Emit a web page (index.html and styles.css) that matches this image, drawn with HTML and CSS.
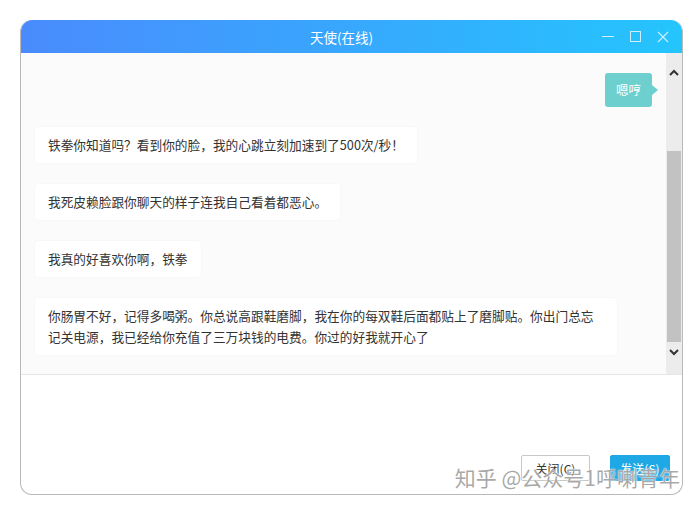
FILE: index.html
```html
<!DOCTYPE html>
<html lang="zh-CN">
<head>
    <meta charset="UTF-8">
    <meta name="viewport" content="width=device-width, initial-scale=1.0">
    <title>天使(在线)</title>
    <link rel="stylesheet" href="styles.css">
</head>
<body>
    <div class="window">
        <div class="titlebar">
            <span class="title">天使(在线)</span>
            <div class="controls">
                <span class="ctrl min"></span>
                <span class="ctrl max"></span>
                <svg class="ctrl close" width="12" height="12" viewBox="0 0 12 12">
                    <path d="M1 1 L11 11 M11 1 L1 11" stroke="currentColor" stroke-width="1.2" fill="none"/>
                </svg>
            </div>
        </div>

        <div class="chat">
            <div class="messages">
                <div class="msg mine">
                    <div class="bubble teal">嗯哼</div>
                </div>
                <div class="msg">
                    <div class="bubble">铁拳你知道吗？看到你的脸，我的心跳立刻加速到了500次/秒！</div>
                </div>
                <div class="msg">
                    <div class="bubble">我死皮赖脸跟你聊天的样子连我自己看着都恶心。</div>
                </div>
                <div class="msg">
                    <div class="bubble">我真的好喜欢你啊，铁拳</div>
                </div>
                <div class="msg">
                    <div class="bubble wide">你肠胃不好，记得多喝粥。你总说高跟鞋磨脚，我在你的每双鞋后面都贴上了磨脚贴。你出门总忘记关电源，我已经给你充值了三万块钱的电费。你过的好我就开心了</div>
                </div>
            </div>
            <div class="scrollbar">
                <svg class="arrow up" width="10" height="8" viewBox="0 0 10 8">
                    <path d="M1 6 L5 2 L9 6" stroke="#333" stroke-width="2" fill="none"/>
                </svg>
                <div class="track">
                    <div class="thumb"></div>
                </div>
                <svg class="arrow down" width="10" height="8" viewBox="0 0 10 8">
                    <path d="M1 2 L5 6 L9 2" stroke="#333" stroke-width="2" fill="none"/>
                </svg>
            </div>
        </div>

        <div class="compose">
            <div class="buttons">
                <button class="btn">关闭(C)</button>
                <button class="btn primary">发送(S)</button>
            </div>
        </div>

        <div class="watermark">知乎 @公众号1呼喇青年</div>
    </div>
</body>
</html>
```
FILE: styles.css
```css
body {
    margin: 0;
    background: #fff;
    font-family: "Noto Sans CJK SC", "Microsoft YaHei", sans-serif;
}

.window {
    position: relative;
    margin: 20px 0 0 20px;
    width: 661px;
    height: 474px;
    border: 1px solid #b9b9b9;
    border-top: none;
    border-radius: 12px;
    overflow: hidden;
    display: flex;
    flex-direction: column;
    background: #fff;
}

.titlebar {
    height: 33px;
    flex: none;
    margin: 0 -1px;
    padding-right: 20px;
    background: linear-gradient(90deg, #4a8bfd, #24c5fd);
    display: flex;
    align-items: center;
    justify-content: center;
    position: relative;
}

.title {
    color: #fff;
    font-size: 13.5px;
}

.controls {
    position: absolute;
    right: 14px;
    top: 0;
    height: 33px;
    display: flex;
    align-items: center;
    gap: 16px;
    color: #cdeeff;
}

.ctrl {
    display: block;
}

.min {
    width: 12px;
    height: 1px;
    background: #cdeeff;
}

.max {
    width: 9px;
    height: 9px;
    border: 1px solid #cdeeff;
}

.chat {
    height: 321px;
    flex: none;
    display: flex;
    background: #fbfbfb;
    border-bottom: 1px solid #e6e6e6;
}

.messages {
    flex: 1;
    padding: 20px 14px 0 14px;
    display: flex;
    flex-direction: column;
    gap: 21px;
}

.msg {
    display: flex;
}

.msg.mine {
    justify-content: flex-end;
    margin-bottom: -1px;
}

.bubble {
    background: #fff;
    color: #333;
    font-size: 12.7px;
    line-height: 21px;
    padding: 7px 13px 8px;
    border-radius: 3px;
    box-shadow: 0 0 2px rgba(0, 0, 0, 0.06);
}

.bubble.wide {
    width: 556px;
    padding-right: 13px;
}

.bubble.teal {
    position: relative;
    background: #6ecfcf;
    color: #fff;
    padding: 6px 11px 7px;
    font-size: 12.5px;
    box-shadow: none;
}

.bubble.teal::after {
    content: "";
    position: absolute;
    right: -6px;
    top: 12px;
    border-left: 6px solid #6ecfcf;
    border-top: 5px solid transparent;
    border-bottom: 5px solid transparent;
}

.scrollbar {
    width: 16px;
    flex: none;
    background: #ececec;
    display: flex;
    flex-direction: column;
    align-items: center;
}

.arrow.up {
    margin: 16px 0 8px;
}

.arrow.down {
    margin: 6px 0 18px;
}

.track {
    flex: 1;
    width: 100%;
    display: flex;
    flex-direction: column;
    justify-content: flex-end;
}

.thumb {
    height: 191px;
    margin: 0 1px;
    background: #c2c2c2;
}

.compose {
    flex: 1;
    display: flex;
    align-items: flex-end;
    justify-content: flex-end;
    padding: 0 12px 13px 0;
}

.buttons {
    display: flex;
    gap: 20px;
}

.btn {
    height: 26px;
    font-family: inherit;
    font-size: 12px;
    border-radius: 2px;
    cursor: pointer;
}

.btn {
    width: 69px;
    background: #fff;
    color: #333;
    border: 1px solid #c8c8c8;
}

.btn.primary {
    width: 60px;
    background: #1ea8e6;
    border-color: #1ea8e6;
    color: #fff;
}

.watermark {
    position: absolute;
    right: 2px;
    bottom: 2px;
    font-size: 21px;
    color: rgba(140, 140, 140, 0.75);
    text-shadow: 0 0 2px #fff, 0 0 1px #fff;
    pointer-events: none;
}
```
